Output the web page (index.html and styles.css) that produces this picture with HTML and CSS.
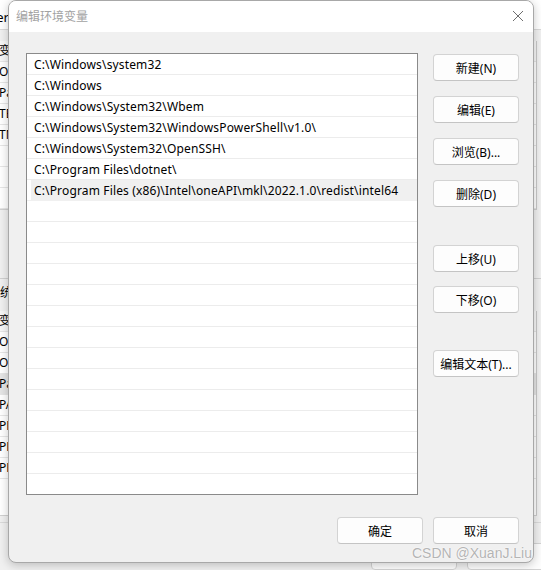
FILE: index.html
```html
<!DOCTYPE html>
<html lang="zh-CN">
<head>
    <meta charset="UTF-8">
    <meta name="viewport" content="width=device-width, initial-scale=1.0">
    <title>编辑环境变量</title>
    <link rel="stylesheet" href="styles.css">
</head>
<body>
    <div class="desktop">
        <!-- fenêtre "Variables d'environnement" derrière le dialogue -->
        <div class="backwin">
            <div class="bw-title"><span class="cell end">user</span></div>
            <ul class="bw-list bw-user">
                <li class="bw-head"><span class="cell">变量</span></li>
                <li><span class="cell">OneDrive</span></li>
                <li><span class="cell">Path</span></li>
                <li><span class="cell">TEMP</span></li>
                <li><span class="cell">TMP</span></li>
                <li></li>
                <li></li>
                <li></li>
            </ul>
            <div class="bw-label"><span class="cell"><span class="shift">系统变量</span></span></div>
            <ul class="bw-list bw-sys">
                <li class="bw-head"><span class="cell">变量</span></li>
                <li><span class="cell">ONEAPI_ROOT</span></li>
                <li><span class="cell">OS</span></li>
                <li class="selected"><span class="cell">Path</span></li>
                <li><span class="cell">PATHEXT</span></li>
                <li><span class="cell">PROCESSOR_ARCHITECTURE</span></li>
                <li><span class="cell">PROCESSOR_IDENTIFIER</span></li>
                <li><span class="cell">PROCESSOR_LEVEL</span></li>
            </ul>
            <div class="bw-footer">
                <span class="bw-btn"></span>
                <span class="bw-btn"></span>
            </div>
        </div>

        <!-- dialogue principal -->
        <div class="dialog">
            <div class="titlebar">
                <span class="title">编辑环境变量</span>
                <svg class="close" width="12" height="12" viewBox="0 0 12 12">
                    <path d="M1 1 L11 11 M11 1 L1 11" stroke="#6e6e6e" stroke-width="1" fill="none"/>
                </svg>
            </div>
            <div class="dlg-body">
                <div class="main">
                    <ul class="pathlist">
                        <li>C:\Windows\system32</li>
                        <li>C:\Windows</li>
                        <li>C:\Windows\System32\Wbem</li>
                        <li>C:\Windows\System32\WindowsPowerShell\v1.0\</li>
                        <li>C:\Windows\System32\OpenSSH\</li>
                        <li>C:\Program Files\dotnet\</li>
                        <li class="selected">C:\Program Files (x86)\Intel\oneAPI\mkl\2022.1.0\redist\intel64</li>
                        <li></li><li></li><li></li><li></li><li></li><li></li><li></li>
                        <li></li><li></li><li></li><li></li><li></li><li></li><li></li>
                    </ul>
                    <div class="side">
                        <div class="btn-group">
                            <button class="btn">新建(N)</button>
                            <button class="btn">编辑(E)</button>
                            <button class="btn">浏览(B)...</button>
                            <button class="btn">删除(D)</button>
                        </div>
                        <div class="btn-group move">
                            <button class="btn">上移(U)</button>
                            <button class="btn">下移(O)</button>
                        </div>
                        <div class="btn-group text">
                            <button class="btn">编辑文本(T)...</button>
                        </div>
                    </div>
                </div>
                <div class="footer">
                    <button class="btn">确定</button>
                    <button class="btn">取消</button>
                </div>
            </div>
        </div>

        <div class="watermark">CSDN @XuanJ.Liu</div>
    </div>
</body>
</html>
```

FILE: styles.css
```css
* {
    box-sizing: border-box;
}
body {
    margin: 0;
    font-family: 'Noto Sans', 'Noto Sans CJK SC', sans-serif;
    font-size: 12px;
    color: #000;
    background-color: #f0f0f0;
}
ul {
    list-style-type: none;
    margin: 0;
    padding: 0;
}
.desktop {
    position: relative;
    width: 541px;
    height: 570px;
    overflow: hidden;
}

/* fenêtre en arrière-plan */
.backwin {
    width: 541px;
    height: 570px;
    background-color: #f0f0f0;
    display: flex;
    flex-direction: column;
}
/* seule la bande gauche reste visible : on coupe le texte à 8px */
.cell {
    display: inline-flex;
    width: 9px;
    overflow: hidden;
    white-space: nowrap;
    vertical-align: top;
}
.cell.end {
    justify-content: flex-end;
}
.shift {
    flex-shrink: 0;
    margin-left: -12px;
}
.bw-title {
    height: 34px;
    background-color: #fff;
    border-bottom: 1px solid #d9d9d9;
    padding-top: 8px;
    font-size: 13px;
}
.bw-list {
    background-color: #fff;
    margin-right: 4px;
    border-right: 1px solid #c8c8c8;
    border-bottom: 1px solid #d0d0d0;
}
.bw-list li {
    height: 21px;
    line-height: 20px;
    border-bottom: 1px solid #e6e6e6;
}
.bw-list li .cell {
    margin-left: -1px;
}
.bw-list .bw-head {
    background-color: #f7f7f7;
}
.bw-list .selected {
    background-color: #e5e5e5;
}
.bw-user {
    margin-top: 11px;
}
.bw-label {
    margin-top: 68px;
    height: 38px;
    line-height: 20px;
    border-top: 1px solid #d0d0d0;
    padding-top: 4px;
}
.bw-sys {
    height: 240px;
}
.bw-footer {
    display: flex;
    justify-content: flex-end;
    gap: 10px;
    margin-top: 6px;
    padding-top: 20px;
    border-top: 1px solid #dadada;
    margin-right: -12px;
}
.bw-btn {
    width: 86px;
    height: 27px;
    background-color: #fdfdfd;
    border: 1px solid #d3d3d3;
    border-radius: 4px;
}

/* dialogue */
.dialog {
    position: absolute;
    left: 8px;
    top: 0;
    width: 526px;
    height: 563px;
    border: 1px solid #a8a8a8;
    border-radius: 8px;
    background-color: #f0f0f0;
    box-shadow: 0 2px 10px rgba(0, 0, 0, 0.22);
    overflow: hidden;
    display: flex;
    flex-direction: column;
}
.titlebar {
    height: 31px;
    background-color: #fff;
    display: flex;
    align-items: center;
    justify-content: space-between;
    padding: 0 9px 0 7px;
}
.title {
    color: #a2a2a2;
    font-size: 12px;
    margin-top: -1px;
}
.close {
    margin-top: -2px;
}
.dlg-body {
    flex: 1;
    padding: 21px 14px 0 17px;
}
.main {
    display: flex;
    gap: 15px;
}
.pathlist {
    width: 392px;
    height: 442px;
    background-color: #fff;
    border: 1px solid #8a8a8a;
    overflow: hidden;
}
.pathlist li {
    height: 21px;
    line-height: 21px;
    padding-left: 7px;
    border-bottom: 1px solid #ececec;
    white-space: nowrap;
    letter-spacing: 0.15px;
}
.pathlist li.selected {
    background: linear-gradient(to right, #fff 4px, #f0f0f0 4px);
    border-bottom-color: #f0f0f0;
}
.side {
    padding-top: 1px;
}
.btn-group {
    display: flex;
    flex-direction: column;
    gap: 15px;
}
.btn-group.move {
    margin-top: 38px;
    gap: 14px;
}
.btn-group.text {
    margin-top: 37px;
}
.btn {
    width: 86px;
    height: 27px;
    padding: 0;
    background-color: #fdfdfd;
    border: 1px solid #d3d3d3;
    border-bottom-color: #c4c4c4;
    border-radius: 4px;
    font-family: 'Noto Sans', 'Noto Sans CJK SC', sans-serif;
    font-size: 12px;
    color: #000;
}
.footer {
    display: flex;
    justify-content: flex-end;
    gap: 10px;
    margin-top: 22px;
}

/* filigrane */
.watermark {
    position: absolute;
    right: 9px;
    bottom: 9px;
    font-family: 'Liberation Sans', 'Noto Sans CJK SC', sans-serif;
    font-size: 14px;
    color: #b4b4b4;
    text-shadow: 0 0 1px #fff, 0 0 2px #fff;
}
```
